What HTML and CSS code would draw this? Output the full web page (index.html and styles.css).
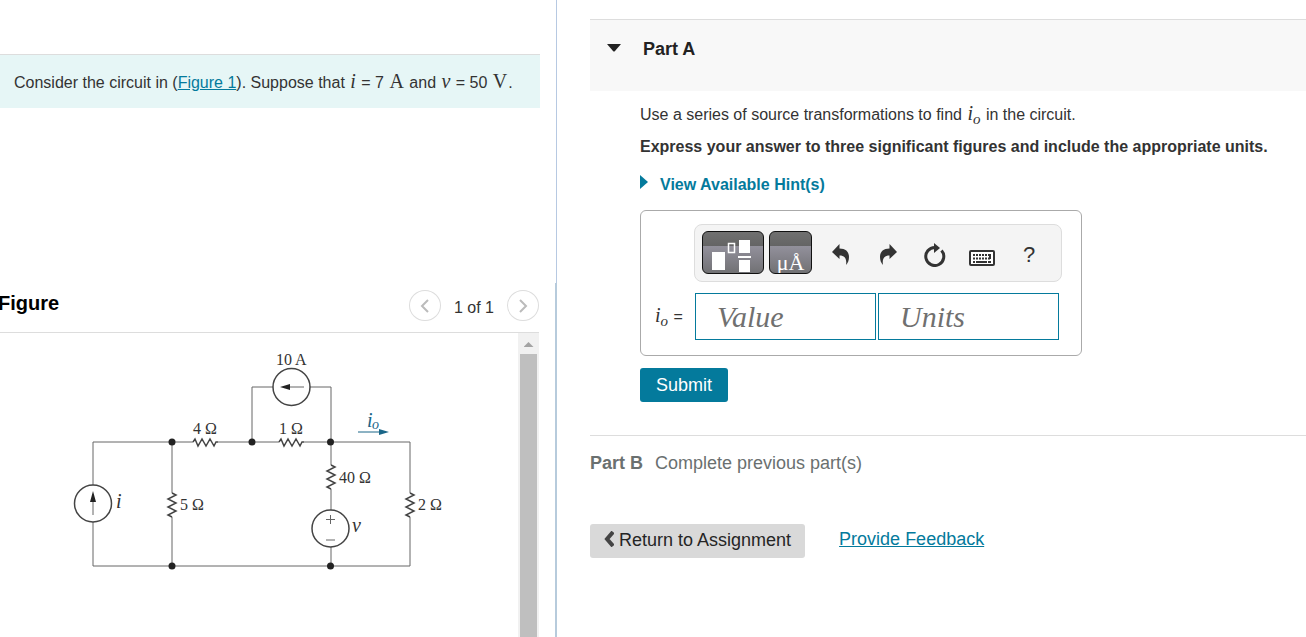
FILE: index.html
```html
<!DOCTYPE html>
<html lang="en">
<head>
  <meta charset="UTF-8">
  <meta name="viewport" content="width=device-width, initial-scale=1.0">
  <title>Source Transformations</title>
  <link rel="stylesheet" href="styles.css">
</head>
<body>
  <div class="page">

    <div class="left">
      <div class="problem">
        <p class="intro">Consider the circuit in (<a href="#figure">Figure 1</a>). Suppose that <i class="math">i</i> = 7 <span class="math">A</span> and <i class="math">v</i> = 50 <span class="math">V</span>.</p>
      </div>

      <div class="figure" id="figure">
        <div class="figure-header">
          <h2>Figure</h2>
          <div class="pager">
            <button type="button" class="round" aria-label="Previous figure">
              <svg width="10" height="16" viewBox="0 0 10 16"><path d="M8 2 L2 8 L8 14" /></svg>
            </button>
            <span>1 of 1</span>
            <button type="button" class="round" aria-label="Next figure">
              <svg width="10" height="16" viewBox="0 0 10 16"><path d="M2 2 L8 8 L2 14" /></svg>
            </button>
          </div>
        </div>

        <div class="viewer">
          <svg class="circuit" width="400" height="240" viewBox="0 0 400 240" role="img" aria-label="Circuit diagram">
            <!-- wires -->
            <g class="wire">
              <path d="M33 145 V102 H133 M158 102 H219 M244 102 H350 V153 M350 177 V226 H33 V182" />
              <path d="M112 102 V153 M112 177 V226" />
              <path d="M192 102 V47 H213 M250 47 H271 V125 M271 149 V170 M271 207 V226" />
            </g>
            <!-- resistors -->
            <g class="resistor">
              <path d="M133 102 l2 -3 l3 7 l4 -7 l4 7 l4 -7 l4 7 l2 -4 h2" />
              <path d="M219 102 l2 -3 l3 7 l4 -7 l4 7 l4 -7 l4 7 l2 -4 h2" />
              <path d="M112 153 l4 2 l-8 4 l8 4 l-8 4 l8 4 l-8 4 l4 2" />
              <path d="M271 125 l4 2 l-8 4 l8 4 l-8 4 l8 4 l-8 4 l4 2" />
              <path d="M350 153 l4 2 l-8 4 l8 4 l-8 4 l8 4 l-8 4 l4 2" />
            </g>
            <!-- sources -->
            <g class="source">
              <circle cx="33" cy="163.500" r="18.500" />
              <circle cx="231.500" cy="47" r="18.500" />
              <circle cx="270.500" cy="188.500" r="18.500" />
            </g>
            <path class="wire" d="M33 175 V158 M244 47 H226 M266 179.500 H275 M270.500 175 V184 M266 200 H275" />
            <path class="dot" d="M33 151 L36 162 H30 Z M220 47 L230 44 V50 Z" />
            <g class="dot">
              <circle cx="112" cy="102" r="3.500" />
              <circle cx="192" cy="102" r="3.500" />
              <circle cx="270.500" cy="102" r="3.500" />
              <circle cx="112" cy="226" r="3.500" />
              <circle cx="270.500" cy="226" r="3.500" />
            </g>
            <!-- labels -->
            <g class="label">
              <text x="216" y="25">10 A</text>
              <text x="133" y="94">4 Ω</text>
              <text x="219" y="94">1 Ω</text>
              <text x="120" y="170">5 Ω</text>
              <text x="279" y="143">40 Ω</text>
              <text x="358" y="170">2 Ω</text>
              <text class="var" x="56" y="168">i</text>
              <text class="var" x="292" y="192">v</text>
            </g>
            <g class="current">
              <path class="stem" d="M298 92 H322" />
              <path d="M319 89 L329 92 L319 95 Z" />
              <text class="var" x="307" y="87">i</text>
              <text class="sub" x="312" y="89">o</text>
            </g>
          </svg>
          <div class="scrollbar" aria-hidden="true">
            <div class="scroll-up"></div>
            <div class="scroll-thumb"></div>
          </div>
        </div>
      </div>
    </div>

    <div class="right">
      <div class="part-header">
        <svg width="14" height="8" viewBox="0 0 14 8"><path d="M0 0 H14 L8 7 Q7 8 6 7 Z" /></svg>
        <h2>Part A</h2>
      </div>

      <div class="part-body">
        <p>Use a series of source transformations to find <i class="math">i<sub>o</sub></i> in the circuit.</p>
        <p class="instructions">Express your answer to three significant figures and include the appropriate units.</p>
        <a class="hints" href="#hints">
          <svg width="8" height="14" viewBox="0 0 8 14"><path d="M0 0 L8 7 L0 14 Z" /></svg>
          <span>View Available Hint(s)</span>
        </a>

        <form id="answer-form">
          <div class="answer">
            <div class="toolbar">
              <button type="button" class="dark templates" aria-label="Templates">
                <svg width="60" height="41" viewBox="0 0 60 41">
                  <path fill="#fff" d="M9 20 H22 V38 H9 Z M36 8 H47 V21 H36 Z M35 24 H48 V26 H35 Z M36 28 H47 V40 H36 Z" />
                  <path fill="none" stroke="#fff" stroke-width="1.500" d="M25.500 11.500 H31.500 V20.500 H25.500 Z" />
                </svg>
              </button>
              <button type="button" class="dark symbols" aria-label="Units symbols">μÅ</button>
              <button type="button" class="tool" aria-label="Undo">
                <svg width="18" height="22" viewBox="0 0 18 22"><path d="M0 8 L7.500 0 V4.500 C14 4.500 17 8 17 13 C17 16 16 19 14 21 C15 15 13 11.500 7.500 11.500 V15 Z" /></svg>
              </button>
              <button type="button" class="tool" aria-label="Redo">
                <svg width="18" height="22" viewBox="0 0 18 22"><path d="M18 8 L10.500 0 V4.500 C4 4.500 1 8 1 13 C1 16 2 19 4 21 C3 15 5 11.500 10.500 11.500 V15 Z" /></svg>
              </button>
              <button type="button" class="tool" aria-label="Reset">
                <svg width="22" height="24" viewBox="0 0 22 24"><path fill="none" stroke="#333" stroke-width="3" d="M11 4.500 A9 9 0 1 0 17.500 7.500" /><path d="M10 0 L16 5 L10 10 Z" /></svg>
              </button>
              <button type="button" class="tool" aria-label="Keyboard shortcuts">
                <svg width="26" height="26" viewBox="0 0 26 26">
                  <rect x="1" y="9" width="24" height="14" rx="1" fill="#fff" stroke="#333" stroke-width="2" />
                  <path fill="none" stroke="#333" stroke-width="2" stroke-dasharray="2 1" d="M4 13 H20 M4 16.500 H22" />
                  <path d="M4 19 H6 V21 H4 Z M7 19 H18 V21 H7 Z M19 19 H22 V21 H19 Z M20 12 H22 V17 H20 Z" />
                </svg>
              </button>
              <button type="button" class="tool help" aria-label="Help">?</button>
            </div>
            <div class="answer-row">
              <label for="value"><i class="math">i<sub>o</sub></i> =</label>
              <input type="text" id="value" placeholder="Value">
              <input type="text" id="units" placeholder="Units" aria-label="Units">
            </div>
          </div>
          <button type="submit" class="submit">Submit</button>
        </form>
      </div>

      <div class="part-b">
        <h2>Part B</h2>
        <span>Complete previous part(s)</span>
      </div>

      <div class="footer">
        <button type="button" class="return">
          <svg width="10" height="16" viewBox="0 0 10 16"><path d="M9 1 L3 8 L9 15" /></svg>
          <span>Return to Assignment</span>
        </button>
        <a href="#feedback">Provide Feedback</a>
      </div>
    </div>

  </div>
</body>
</html>
```
FILE: styles.css
```css
* {
  box-sizing: border-box;
}

body {
  margin: 0;
  font-family: "Liberation Sans", Arial, sans-serif;
  font-size: 16px;
  line-height: 20px;
  color: #333;
  background-color: #fff;
}

h2,
p {
  margin: 0;
}

h2 {
  font-size: 18px;
}

a {
  color: #047a9c;
}

button {
  font-family: inherit;
  cursor: pointer;
}

svg {
  display: block;
  flex: none;
}

.page {
  display: grid;
  grid-template-columns: 42.65% 1fr;
  min-height: 100vh;
}

.math {
  margin: 0 1px;
  font-family: "Liberation Serif", "Times New Roman", serif;
  font-size: 20px;
  line-height: 0;
}

.math sub {
  font-size: 15px;
  line-height: 0;
  vertical-align: -4px;
}

/* left column */
.left {
  display: flex;
  flex-direction: column;
}

.problem {
  height: 283px;
  padding: 54px 16px 0 0;
  border-right: 1px solid #b7c9e2;
}

.intro {
  padding: 18px 14px 15px;
  border-top: 1px solid #ddd;
  background-color: #e6f6f6;
}

.figure {
  flex: 1;
  display: flex;
  flex-direction: column;
  padding-right: 16px;
  border-right: 2px solid #b7cbdc;
}

.figure-header {
  display: flex;
  justify-content: space-between;
  height: 50px;
  padding-top: 7px;
  border-bottom: 1px solid #ddd;
}

.figure-header h2 {
  margin-left: -2px;
  padding-top: 3px;
  font-size: 20px;
  color: #000;
}

.pager {
  display: flex;
  align-items: flex-start;
  gap: 13px;
}

.pager span {
  padding-top: 8px;
}

.round {
  display: flex;
  align-items: center;
  justify-content: center;
  width: 32px;
  height: 31px;
  padding: 0;
  border: 1px solid #ddd;
  border-radius: 50%;
  background-color: #fff;
}

.round path {
  fill: none;
  stroke: #bbb;
  stroke-width: 2;
}

.viewer {
  flex: 1;
  display: flex;
  justify-content: space-between;
}

.circuit {
  margin: 7px 0 0 60px;
}

.wire {
  fill: none;
  stroke: #666;
}

.resistor,
.source {
  fill: none;
  stroke: #444;
  stroke-width: 1.5;
}

.source {
  fill: #fff;
}

.dot {
  fill: #222;
}

.label,
.current {
  font-family: "Liberation Serif", "Times New Roman", serif;
  font-size: 16px;
  fill: #333;
}

.var {
  font-size: 20px;
  font-style: italic;
}

.current {
  fill: #1a6688;
}

.stem {
  stroke: #1a6688;
}

.sub {
  font-size: 14px;
  font-style: italic;
}

.scrollbar {
  width: 21px;
  padding: 0 2px;
  background-color: #f1f1f1;
  display: flex;
  flex-direction: column;
}

.scroll-up {
  width: 10px;
  height: 5px;
  margin: 9px auto 7px;
  background-color: #a3a3a3;
  clip-path: polygon(50% 0, 100% 100%, 0 100%);
}

.scroll-thumb {
  flex: 1;
  background-color: #bfbfbf;
}

/* right column */
.right {
  padding: 19px 0 0 33px;
}

.part-header {
  display: flex;
  gap: 22px;
  height: 72px;
  padding: 19px 17px;
  border-top: 1px solid #ddd;
  background-color: #f8f8f8;
}

.part-header svg {
  margin-top: 5px;
  fill: #222;
}

.part-header h2 {
  color: #222;
}

.part-body {
  padding: 14px 16px 33px 50px;
}

.instructions {
  margin-top: 12px;
  font-weight: bold;
}

.hints {
  display: flex;
  gap: 12px;
  margin: 18px 0 15px;
  font-weight: bold;
  text-decoration: none;
}

.hints svg {
  fill: #047a9c;
}

.answer {
  max-width: 442px;
  padding: 13px 19px 15px 13px;
  border: 1px solid #aaa;
  border-radius: 6px;
}

.toolbar {
  display: flex;
  align-items: flex-start;
  gap: 5px;
  height: 58px;
  margin-left: 40px;
  padding: 6px 7px 0;
  border: 1px solid #ddd;
  border-radius: 8px;
  background-color: #f4f4f4;
}

.dark {
  height: 43px;
  padding: 0;
  border: 1px solid #111;
  border-radius: 6px;
  background: linear-gradient(#707070 0, #646464 34%, #92909b 35%, #717174 100%);
  color: #fff;
  overflow: hidden;
}

.templates {
  width: 62px;
}

.symbols {
  width: 43px;
  padding-top: 18px;
  font-family: "Liberation Serif", "Times New Roman", serif;
  font-size: 22px;
}

.tool {
  display: flex;
  align-items: center;
  justify-content: center;
  width: 42px;
  height: 43px;
  padding: 4px 0 0;
  border: 0;
  background: none;
  color: #333;
  fill: #333;
}

.symbols + .tool {
  margin-left: 3px;
}

.help {
  font-size: 22px;
}

.answer-row {
  display: flex;
  align-items: center;
  gap: 2px;
  margin: 11px 3px 0 0;
}

.answer-row label {
  width: 39px;
  white-space: nowrap;
}

.answer-row input {
  flex: 1;
  min-width: 0;
  height: 47px;
  padding: 0 21px;
  border: 1px solid #047a9c;
  font-family: "Liberation Serif", "Times New Roman", serif;
  font-size: 30px;
}

.answer-row input::placeholder {
  font-style: italic;
  color: #707070;
}

.submit {
  height: 34px;
  margin-top: 12px;
  padding: 0 16px;
  border: 0;
  border-radius: 3px;
  background-color: #047a9c;
  color: #fff;
  font-size: 18px;
}

.part-b {
  display: flex;
  gap: 12px;
  padding-top: 17px;
  border-top: 1px solid #ddd;
  font-size: 18px;
  color: #6a7070;
}

.footer {
  display: flex;
  gap: 34px;
  margin-top: 51px;
  font-size: 18px;
}

.footer a {
  padding-top: 5px;
}

.return {
  display: flex;
  gap: 5px;
  height: 34px;
  padding: 6px 14px;
  border: 0;
  border-radius: 3px;
  background-color: #d9d9d9;
  font-size: 18px;
  color: #252525;
}

.return svg {
  margin-top: 1px;
}

.return path {
  fill: none;
  stroke: #444;
  stroke-width: 4;
}
```
